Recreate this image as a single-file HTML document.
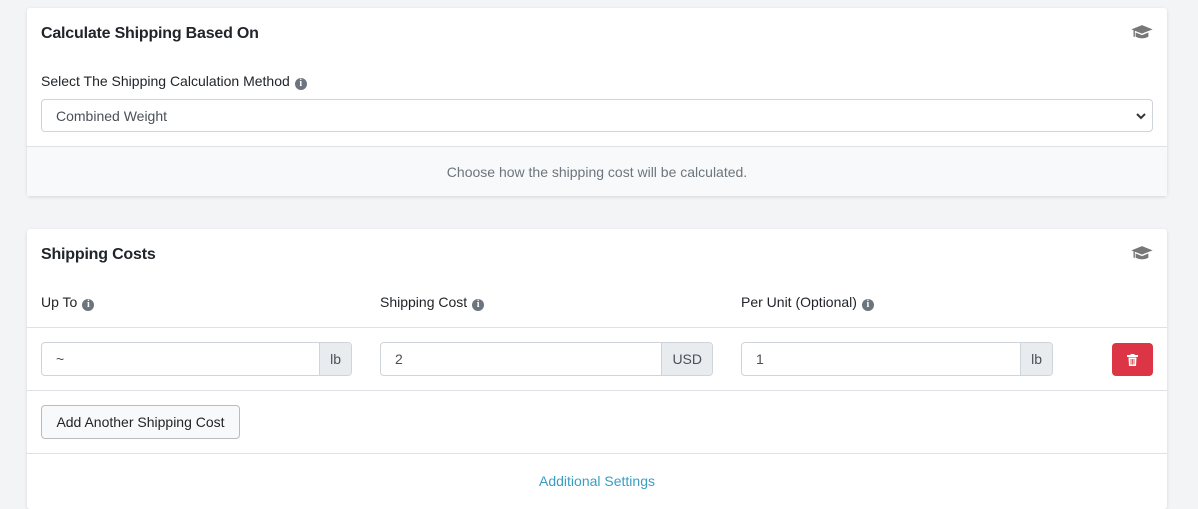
<!DOCTYPE html>
<html><head><style>
body{margin:0;background:#f3f4f6;font-family:"Liberation Sans",sans-serif;color:#212529;width:1198px;height:507px;overflow:hidden;position:relative}
.a{position:absolute}
.card{position:absolute;left:27px;width:1140px;background:#fff;box-shadow:0 1px 3px rgba(0,0,0,.12);border-radius:3px}
.t{font-size:16px;font-weight:bold;color:#212529;letter-spacing:-0.2px}
.l{font-size:14px;color:#212529}
.info{display:inline-block;width:12px;height:12px;border-radius:50%;background:#6c757d;color:#fff;font-size:10px;font-weight:bold;text-align:center;line-height:12px;font-family:"Liberation Serif",serif;vertical-align:0;margin-left:5px}
.inp{position:absolute;height:32px;border:1px solid #ced4da;border-radius:4px;box-sizing:border-box;font-size:14px;line-height:30px;padding-left:14px;color:#495057;background:#fff}
.add{position:absolute;right:0;top:0;bottom:0;background:#e9ecef;border-left:1px solid #ced4da;padding:0 10px;color:#495057;border-radius:0 3px 3px 0}
.hr{position:absolute;left:0;right:0;height:1px;background:#dee2e6}
</style></head><body>
<div class="card" style="top:8px;height:188px">
 <div class="a t" style="left:14px;top:17px">Calculate Shipping Based On</div>
 <svg class="a" style="left:1103px;top:16px" width="24" height="17" viewBox="0 0 22 16"><path d="M11 1 L21 5 L11 9 L1 5Z" fill="#777"/><path d="M5 8 V12 Q11 15 17 12 V8 L11 10.5Z" fill="#777"/><rect x="3" y="5" width="1.3" height="7" fill="#777"/></svg>
 <div class="a l" style="left:14px;top:65px">Select The Shipping Calculation Method<span class="info">i</span></div>
 <div class="inp" style="left:14px;top:91px;width:1112px;height:33px;line-height:32px">Combined Weight
  <svg class="a" style="right:6px;top:12px" width="10" height="8" viewBox="0 0 10 8"><path d="M1 2 L5 6 L9 2" stroke="#333" stroke-width="2" fill="none"/></svg></div>
 <div class="hr" style="top:138px"></div>
 <div class="a" style="left:0;right:0;top:139px;bottom:0;background:#f8f9fa;text-align:center;font-size:14px;color:#6c757d;line-height:51px">Choose how the shipping cost will be calculated.</div>
</div>
<div class="card" style="top:229px;height:280px">
 <div class="a t" style="left:14px;top:17px">Shipping Costs</div>
 <svg class="a" style="left:1103px;top:16px" width="24" height="17" viewBox="0 0 22 16"><path d="M11 1 L21 5 L11 9 L1 5Z" fill="#777"/><path d="M5 8 V12 Q11 15 17 12 V8 L11 10.5Z" fill="#777"/><rect x="3" y="5" width="1.3" height="7" fill="#777"/></svg>
 <div class="a l" style="left:14px;top:65px">Up To<span class="info">i</span></div>
 <div class="a l" style="left:353px;top:65px">Shipping Cost<span class="info">i</span></div>
 <div class="a l" style="left:714px;top:65px">Per Unit (Optional)<span class="info">i</span></div>
 <div class="hr" style="top:98px"></div>
 <div class="inp" style="left:14px;top:113px;width:311px;height:34px;line-height:33px">~<span class="add">lb</span></div>
 <div class="inp" style="left:353px;top:113px;width:333px;height:34px;line-height:33px">2<span class="add">USD</span></div>
 <div class="inp" style="left:714px;top:113px;width:312px;height:34px;line-height:33px">1<span class="add">lb</span></div>
 <div class="a" style="left:1085px;top:114px;width:41px;height:33px;background:#dc3545;border-radius:4px">
  <svg class="a" style="left:15px;top:11px" width="11" height="12" viewBox="0 0 11 12"><rect x="0" y="1" width="11" height="2" fill="#fff"/><rect x="3.5" y="0" width="4" height="1.5" fill="#fff"/><path d="M1.5 3.5 H9.5 L9 12 H2Z" fill="#fff"/><path d="M4 5V10.5M5.5 5V10.5M7 5V10.5" stroke="#dc3545" stroke-width=".8"/></svg></div>
 <div class="hr" style="top:161px"></div>
 <div class="a" style="left:14px;top:176px;width:199px;height:34px;box-sizing:border-box;border:1px solid #b8bcc0;border-radius:4px;background:#f8f9fa;font-size:14px;text-align:center;line-height:33px">Add Another Shipping Cost</div>
 <div class="hr" style="top:224px"></div>
 <div class="a" style="left:0;right:0;top:244px;text-align:center;font-size:14px;color:#3a9ec2">Additional Settings</div>
</div>
</body></html>
